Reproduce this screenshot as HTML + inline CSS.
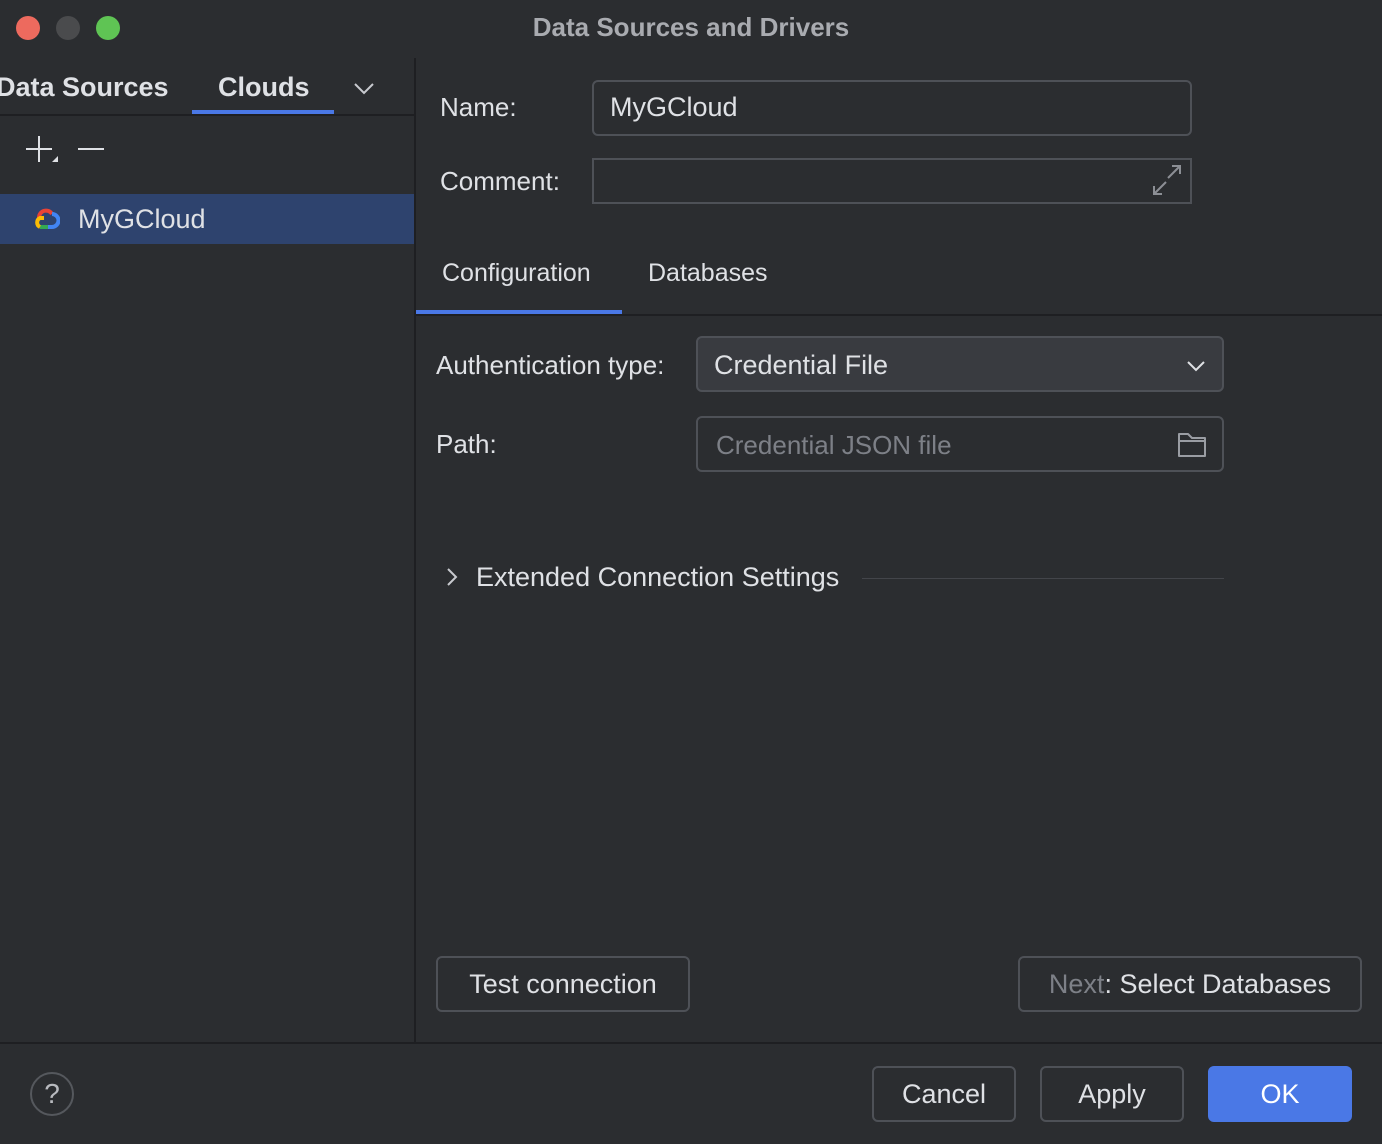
<!DOCTYPE html>
<html><head><style>
*{box-sizing:border-box;margin:0;padding:0}
body{width:1382px;height:1144px;background:#2b2d30;font-family:"Liberation Sans",sans-serif;color:#dfe1e5;position:relative;overflow:hidden;font-size:26px}
.a{position:absolute}
.dot{position:absolute;top:16px;width:24px;height:24px;border-radius:50%}
.box{position:absolute;border:2px solid #4e5157;border-radius:6px}
.btn{position:absolute;border:2px solid #4e5157;border-radius:6px;text-align:center;font-size:27px;line-height:52px}
</style></head><body>
<div class="dot" style="left:16px;background:#ed6a5e"></div>
<div class="dot" style="left:56px;background:#4a4b4d"></div>
<div class="dot" style="left:96px;background:#5fc454"></div>
<div class="a" style="left:0;width:1382px;top:12px;text-align:center;font-weight:bold;color:#a9abb0;font-size:26px">Data Sources and Drivers</div>

<div class="a" style="left:-4px;top:72px;font-weight:bold;font-size:27px">Data Sources</div>
<div class="a" style="left:218px;top:72px;font-weight:bold;font-size:27px">Clouds</div>
<div class="a" style="left:192px;top:110px;width:142px;height:6px;background:#4a78e6"></div>
<svg class="a" style="left:352px;top:78px" width="24" height="20"><path d="M3 6l9 9 9-9" stroke="#c8cacf" stroke-width="2" fill="none"/></svg>
<div class="a" style="left:0;top:114px;width:414px;height:2px;background:#1e1f22"></div>
<div class="a" style="left:414px;top:58px;width:2px;height:986px;background:#1e1f22"></div>
<svg class="a" style="left:24px;top:134px" width="90" height="36"><path d="M15 2v26M2 15h26M54 15h26" stroke="#dfe1e5" stroke-width="2"/><path d="M34 28h-6l6-6z" fill="#dfe1e5"/></svg>
<div class="a" style="left:0;top:194px;width:414px;height:50px;background:#2e436e"></div>
<svg class="a" style="left:32px;top:206px" width="28" height="24" viewBox="0 0 28 24"><path d="M7 12a7 7 0 0 1 13-4" stroke="#ea4335" stroke-width="4" fill="none"/><path d="M20 8a6 6 0 0 1 0 13h-4" stroke="#4285f4" stroke-width="4" fill="none"/><path d="M16 21H8" stroke="#34a853" stroke-width="4"/><path d="M8 21a5 5 0 0 1 0-9h4" stroke="#fbbc05" stroke-width="4" fill="none"/></svg>
<div class="a" style="left:78px;top:204px;font-size:27px">MyGCloud</div>

<div class="a" style="left:440px;top:92px">Name:</div>
<div class="box" style="left:592px;top:80px;width:600px;height:56px;border-radius:6px"></div>
<div class="a" style="left:610px;top:92px;font-size:27px">MyGCloud</div>
<div class="a" style="left:440px;top:166px">Comment:</div>
<div class="box" style="left:592px;top:158px;width:600px;height:46px;border-radius:0"></div>
<svg class="a" style="left:1150px;top:164px" width="34" height="34"><path d="M18 14l12-12M22 2h8v8M16 18L4 30M4 22v8h8" stroke="#8c8f95" stroke-width="2" fill="none"/></svg>

<div class="a" style="left:442px;top:259px;font-size:25px">Configuration</div>
<div class="a" style="left:648px;top:259px;font-size:25px">Databases</div>
<div class="a" style="left:416px;top:310px;width:206px;height:6px;background:#4a78e6"></div>
<div class="a" style="left:416px;top:314px;width:966px;height:2px;background:#1e1f22"></div>

<div class="a" style="left:436px;top:350px">Authentication type:</div>
<div class="box" style="left:696px;top:336px;width:528px;height:56px;background:#393b40"></div>
<div class="a" style="left:714px;top:350px;font-size:27px">Credential File</div>
<svg class="a" style="left:1184px;top:356px" width="24" height="20"><path d="M4 6l8 8 8-8" stroke="#dfe1e5" stroke-width="2" fill="none"/></svg>
<div class="a" style="left:436px;top:429px">Path:</div>
<div class="box" style="left:696px;top:416px;width:528px;height:56px"></div>
<div class="a" style="left:716px;top:430px;color:#7d8087;font-size:26px">Credential JSON file</div>
<svg class="a" style="left:1176px;top:430px" width="32" height="28"><path d="M3 4h9l4 4h13v18H3z" stroke="#9a9da3" stroke-width="2" fill="none" stroke-linejoin="round"/><path d="M3 11h26" stroke="#9a9da3" stroke-width="2"/></svg>

<svg class="a" style="left:444px;top:566px" width="16" height="22"><path d="M4 3l8 8-8 8" stroke="#c8cacf" stroke-width="2" fill="none"/></svg>
<div class="a" style="left:476px;top:562px;font-size:27px">Extended Connection Settings</div>
<div class="a" style="left:862px;top:578px;width:362px;height:1px;background:#43454a"></div>

<div class="btn" style="left:436px;top:956px;width:254px;height:56px">Test connection</div>
<div class="btn" style="left:1018px;top:956px;width:344px;height:56px"><span style="color:#7d8087">Next</span>: Select Databases</div>

<div class="a" style="left:0;top:1042px;width:1382px;height:2px;background:#1e1f22"></div>
<div class="a" style="left:30px;top:1072px;width:44px;height:44px;border:2px solid #55585d;border-radius:50%;text-align:center;line-height:40px;font-size:28px;color:#b8babf">?</div>
<div class="btn" style="left:872px;top:1066px;width:144px;height:56px">Cancel</div>
<div class="btn" style="left:1040px;top:1066px;width:144px;height:56px">Apply</div>
<div class="btn" style="left:1208px;top:1066px;width:144px;height:56px;background:#4a78e6;border-color:#4a78e6;color:#fff">OK</div>
</body></html>
